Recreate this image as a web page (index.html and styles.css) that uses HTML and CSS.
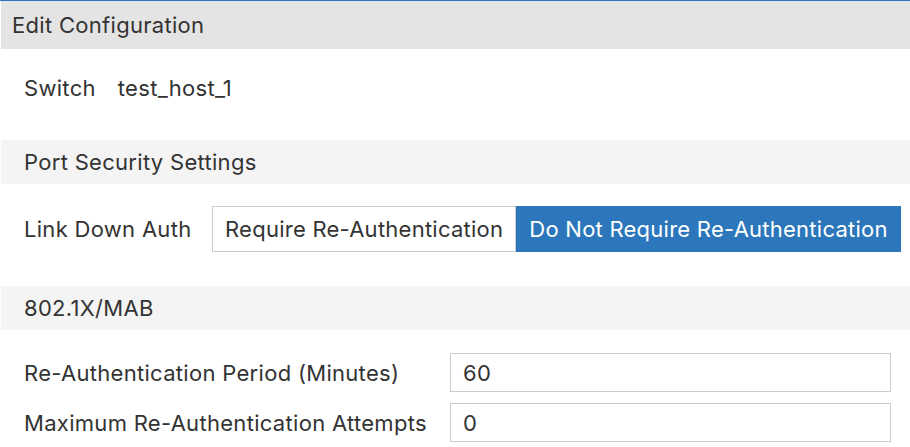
FILE: index.html
```html
<!DOCTYPE html>
<html lang="en">
<head>
    <meta charset="UTF-8">
    <meta name="viewport" content="width=device-width, initial-scale=1.0">
    <title>Edit Configuration</title>
    <link rel="stylesheet" href="styles.css">
</head>
<body>
    <div class="panel">
        <div class="panel-header">Edit Configuration</div>

        <div class="info-row">
            <span class="info-label">Switch</span>
            <span class="info-value">test_host_1</span>
        </div>

        <!-- Port security -->
        <div class="section-title">Port Security Settings</div>
        <div class="form-row link-row">
            <label>Link Down Auth</label>
            <div class="segmented">
                <button class="seg-btn">Require Re-Authentication</button>
                <button class="seg-btn active">Do Not Require Re-Authentication</button>
            </div>
        </div>

        <!-- 802.1X / MAB -->
        <div class="section-title mab">802.1X/MAB</div>
        <div class="form-grid">
            <label for="reauthPeriod">Re-Authentication Period (Minutes)</label>
            <input id="reauthPeriod" type="text" value="60">
            <label for="reauthAttempts">Maximum Re-Authentication Attempts</label>
            <input id="reauthAttempts" type="text" value="0">
        </div>
    </div>
</body>
</html>
```

FILE: styles.css
```css
body {
    font-family: Inter, "Noto Sans", sans-serif;
    font-size: 22px;
    letter-spacing: 0.3px;
    color: #333;
    background-color: #fff;
    margin: 0;
    padding: 0;
}

.panel {
    border-top: 1px solid #2b77bb;
    padding-left: 1px;
}

.panel-header {
    background-color: #e4e4e4;
    height: 48px;
    line-height: 48px;
    padding-left: 11px;
}

.info-row {
    display: flex;
    gap: 22px;
    padding: 19px 23px 32px;
    line-height: 40px;
}

.section-title {
    background-color: #f4f4f4;
    height: 44px;
    line-height: 44px;
    padding-left: 23px;
}

.form-row {
    display: flex;
    align-items: center;
    padding: 0 23px;
}

.link-row {
    margin: 22px 0 34px;
}

.link-row label {
    width: 188px;
    flex-shrink: 0;
}

.segmented {
    display: flex;
    flex-shrink: 0;
}

.seg-btn {
    font-family: inherit;
    font-size: 22px;
    letter-spacing: 0.25px;
    white-space: nowrap;
    height: 46px;
    padding: 0 12px;
    border: 1px solid #ccc;
    background-color: #fff;
    color: #333;
    cursor: pointer;
}

.seg-btn.active {
    background-color: #2c77bb;
    border-color: #2c77bb;
    color: #fff;
}

.form-grid {
    display: grid;
    grid-template-columns: 426px 441px;
    row-gap: 11px;
    align-items: center;
    padding: 23px 23px 0;
}

.form-grid input {
    font-family: inherit;
    font-size: 22px;
    letter-spacing: 0.3px;
    color: #333;
    height: 39px;
    box-sizing: border-box;
    border: 1px solid #ccc;
    padding: 0 12px;
    outline: none;
}
```
